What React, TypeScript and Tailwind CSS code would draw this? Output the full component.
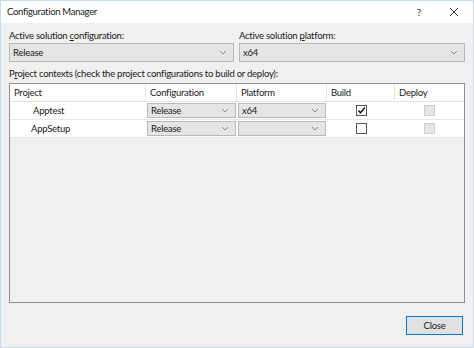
import React from 'react';

const font = { fontFamily: 'Lato, "Noto Sans", sans-serif' };

const Chevron = () => (
    <svg width="8" height="5" viewBox="0 0 8 5" className="shrink-0">
        <path d="M1 1 L4 4 L7 1" fill="none" stroke="#8a8a8a" strokeWidth="1" />
    </svg>
);

interface ComboProps {
    value: string;
    className?: string;
}

const Combo = ({ value, className = '' }: ComboProps) => (
    <div className={`flex items-center justify-between border border-[#b9b9b9] bg-[#e5e5e5] pl-[3px] pr-[6px] ${className}`}>
        <span className="text-[#1a1a1a]">{value}</span>
        <Chevron />
    </div>
);

const Checkbox = ({ checked, disabled }: { checked?: boolean; disabled?: boolean }) => (
    <div
        className={`flex h-[11px] w-[11px] items-center justify-center border ${
            disabled ? 'border-[#cfcfcf] bg-[#e6e6e6]' : 'border-[#555] bg-white'
        }`}
    >
        {checked && (
            <svg width="9" height="9" viewBox="0 0 9 9">
                <path d="M1.5 4.5 L3.5 6.8 L7.8 1.5" fill="none" stroke="#111" strokeWidth="1.4" />
            </svg>
        )}
    </div>
);

const rows = [
    { name: 'Apptest', platform: 'x64', build: true, indent: 'pl-[23px]' },
    { name: 'AppSetup', platform: '', build: false, indent: 'pl-[21px]' },
];

const App = () => {
    return (
        <div style={font} className="flex h-[348px] w-[474px] flex-col overflow-hidden border border-[#c9dbe6] bg-[#f0f0f0] text-[9.5px] leading-none tracking-[-0.25px] text-[#1a1a1a]">
            {/* title bar */}
            <div className="flex h-[22px] shrink-0 items-center bg-white pl-[6px]">
                <span className="tracking-[-0.3px] text-[#222]">Configuration Manager</span>
                <span className="ml-auto mr-[28px] text-[10px] text-[#333]">?</span>
                <svg width="10" height="10" viewBox="0 0 10 10" className="mr-[14px]">
                    <path d="M1 1 L9 9 M9 1 L1 9" stroke="#333" strokeWidth="1" />
                </svg>
            </div>

            <div className="flex flex-1 flex-col px-[8px]">
                {/* active configs */}
                <div className="mt-[8px] flex gap-[5px]">
                    <div className="flex w-[225px] flex-col gap-[2px]">
                        <span className="h-[10px]">
                            Active solution <span className="underline">c</span>onfiguration:
                        </span>
                        <Combo value="Release" className="h-[19px]" />
                    </div>
                    <div className="flex flex-1 flex-col gap-[2px]">
                        <span className="h-[10px]">
                            Active solution <span className="underline">p</span>latform:
                        </span>
                        <Combo value="x64" className="h-[19px]" />
                    </div>
                </div>

                <div className="mt-[7px] h-[10px]">
                    P<span className="underline">r</span>oject contexts (check the project configurations to build or deploy):
                </div>

                {/* project grid */}
                <div className="mt-[4px] flex h-[220px] flex-col border border-[#8f8f8f] bg-[#f0f0f0]">
                    <div className="grid h-[18px] grid-cols-[136px_91px_90px_68px_1fr] border-b border-[#e3e3e3] bg-white">
                        <div className="flex items-center border-r border-[#e3e3e3] pl-[4px]">Project</div>
                        <div className="flex items-center border-r border-[#e3e3e3] pl-[4px]">Configuration</div>
                        <div className="flex items-center border-r border-[#e3e3e3] pl-[4px]">Platform</div>
                        <div className="flex items-center border-r border-[#e3e3e3] pl-[4px]">Build</div>
                        <div className="flex items-center pl-[4px]">Deploy</div>
                    </div>
                    {rows.map((row) => (
                        <div key={row.name} className="grid h-[18px] grid-cols-[136px_91px_90px_68px_1fr] border-b border-[#e8e8e8] bg-white">
                            <div className={`flex items-center ${row.indent}`}>{row.name}</div>
                            <div className="p-[1px]">
                                <Combo value="Release" className="h-full" />
                            </div>
                            <div className="p-[1px]">
                                <Combo value={row.platform} className="h-full" />
                            </div>
                            <div className="flex items-center justify-center">
                                <Checkbox checked={row.build} />
                            </div>
                            <div className="flex items-center justify-center">
                                <Checkbox disabled />
                            </div>
                        </div>
                    ))}
                </div>

                {/* footer */}
                <div className="mt-[13px] flex justify-end pr-[2px]">
                    <button className="h-[19px] w-[57px] border border-[#0078d7] bg-[#e1e1e1] text-[9.5px] text-[#1a1a1a]">
                        Close
                    </button>
                </div>
            </div>
        </div>
    );
};

export default App;
